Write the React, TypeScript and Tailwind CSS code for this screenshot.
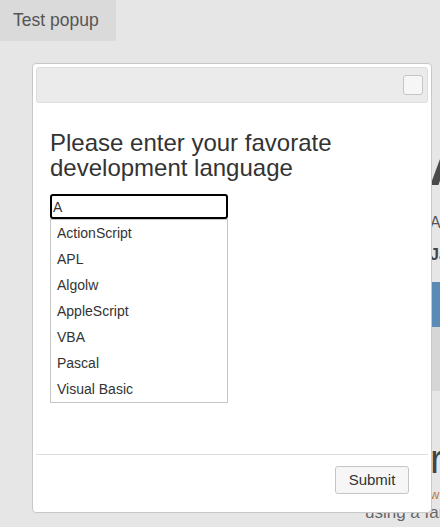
import { useState } from "react";

const languages = [
  "ActionScript",
  "APL",
  "Algolw",
  "AppleScript",
  "VBA",
  "Pascal",
  "Visual Basic",
];

export default function App() {
  const [value, setValue] = useState("A");

  return (
    <div
      className="relative h-[527px] w-[440px] overflow-hidden bg-[#e6e6e6] text-[#333]"
      style={{ fontFamily: '"Liberation Sans", Arial, sans-serif' }}
    >
      {/* page behind the popup */}
      <button className="block h-[41px] w-[116px] bg-[#dadada] text-left pl-[13px] text-[17.5px] text-[#555]">
        Test popup
      </button>

      <div className="flex flex-col">
        <div className="mt-[96px] pl-[429px] whitespace-nowrap text-[56px] font-bold leading-[58px] text-[#4a4a4a]">
          A
        </div>
        <div className="mt-[18px] pl-[430px] whitespace-nowrap text-[16px] leading-5 text-[#555]">
          A
        </div>
        <div className="mt-[12px] pl-[430px] whitespace-nowrap text-[16px] font-bold leading-5 text-[#444]">
          Ja
        </div>
        <div className="ml-[432px] mt-[17px] h-[45px] bg-[#5b8ab6]" />
        <div className="ml-[432px] h-[64px] bg-[#d6d6d6]" />
        <div className="mt-[48px] pl-[430px] whitespace-nowrap text-[40px] leading-[40px] text-[#444]">
          r
        </div>
        <div className="mt-[8px] pl-[430px] whitespace-nowrap text-[13px] leading-4 text-[#c07a3a]">
          w
        </div>
        <div className="pl-[365px] whitespace-nowrap text-[17px] leading-5 text-[#666]">
          using a family
        </div>
      </div>

      {/* popup */}
      <div className="absolute left-[32px] top-[63px] flex h-[450px] w-[400px] flex-col rounded-[4px] border border-[#c8c8c8] bg-white p-[3px]">
        <div className="flex h-[36px] items-center justify-end rounded-[3px] border border-[#dddddd] bg-[#ebebeb] pr-[4px]">
          <button className="h-[20px] w-[20px] rounded-[3px] border border-[#c5c5c5] bg-[#f6f6f6]" />
        </div>

        <div className="flex-1 px-[14px] pt-[27px]">
          <h2 className="text-[24px] leading-[25px] text-[#333]">
            Please enter your favorate development language
          </h2>
          <div className="mt-[14px] w-[178px]">
            <input
              value={value}
              onChange={(e) => setValue(e.target.value)}
              className="block h-[25px] w-full rounded-[3px] border-2 border-black px-[1px] text-[14px] text-[#333] outline-none"
            />
            <ul className="border border-[#c5c5c5] bg-white">
              {languages.map((lang) => (
                <li key={lang} className="h-[26px] px-[6px] text-[14px] leading-[26px] text-[#333]">
                  {lang}
                </li>
              ))}
            </ul>
          </div>
        </div>

        <div className="flex h-[55px] items-start justify-end border-t border-[#dddddd] pr-[19px] pt-[11px]">
          <button className="h-[28px] w-[74px] rounded-[3px] border border-[#c5c5c5] bg-[#f6f6f6] text-[15px] text-[#333]">
            Submit
          </button>
        </div>
      </div>
    </div>
  );
}
